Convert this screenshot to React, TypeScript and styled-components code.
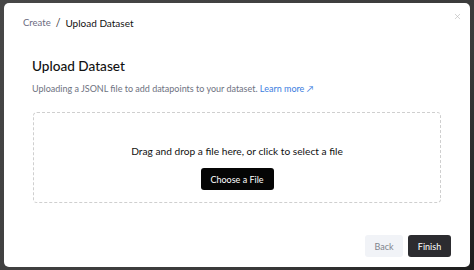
import styled, { createGlobalStyle } from "styled-components";
import { X } from "lucide-react";

const GlobalStyle = createGlobalStyle`
  html, body {
    margin: 0;
    padding: 0;
    height: 100%;
    background: #3d3d3d;
  }
  #root {
    height: 100%;
  }
  * {
    box-sizing: border-box;
  }
`;

const App = () => {
  return (
    <>
      <GlobalStyle />
      <Backdrop>
        <Modal>
          <Header>
            <Crumb>Create</Crumb>
            <Slash>/</Slash>
            <CrumbCurrent>Upload Dataset</CrumbCurrent>
          </Header>
          <CloseButton aria-label="Close">
            <X size={9} strokeWidth={1.6} />
          </CloseButton>
          <Body>
            <Title>Upload Dataset</Title>
            <Subtitle>
              Uploading a JSONL file to add datapoints to your dataset.{" "}
              <LearnMore href="#">Learn more ↗</LearnMore>
            </Subtitle>
            <DropZone>
              <DropText>Drag and drop a file here, or click to select a file</DropText>
              <ChooseButton>Choose a File</ChooseButton>
            </DropZone>
          </Body>
          <Footer>
            <BackButton>Back</BackButton>
            <FinishButton>Finish</FinishButton>
          </Footer>
        </Modal>
      </Backdrop>
    </>
  );
};

export default App;

const Backdrop = styled.div`
  height: 270px;
  padding: 3px 4px 3px 4px;
  background: linear-gradient(135deg, #474747 0%, #3a3a3a 70%, #1e1e1e 100%);
`;

const Modal = styled.div`
  position: relative;
  height: 264px;
  width: 466px;
  background: #ffffff;
  border-radius: 5px;
  display: flex;
  flex-direction: column;
  font-family: Lato, "Liberation Sans", sans-serif;
`;

const Header = styled.div`
  display: flex;
  align-items: center;
  gap: 5px;
  padding: 6px 19px 0;
  height: 33px;
`;

const Crumb = styled.span`
  font-size: 9.5px;
  color: #6b6b80;
`;

const Slash = styled.span`
  font-size: 10.5px;
  color: #333;
`;

const CrumbCurrent = styled.span`
  font-size: 10px;
  font-weight: 400;
  color: #111;
`;

const CloseButton = styled.button`
  position: absolute;
  top: 9px;
  right: 8px;
  border: none;
  background: none;
  padding: 0;
  color: #b5b5b5;
  display: flex;
`;

const Body = styled.div`
  flex: 1;
  padding: 22px 28px 0 28px;
  display: flex;
  flex-direction: column;
`;

const Title = styled.h2`
  margin: 0;
  font-size: 13.6px;
  font-weight: 500;
  color: #111;
`;

const Subtitle = styled.p`
  margin: 9px 0 0;
  font-size: 9px;
  color: #6e7281;
`;

const LearnMore = styled.a`
  color: #3b7de0;
  text-decoration: none;
`;

const DropZone = styled.div`
  margin-top: 18px;
  height: 91px;
  width: 408px;
  margin-left: 1px;
  border: 1px dashed #cfcfcf;
  border-radius: 4px;
  display: flex;
  flex-direction: column;
  align-items: center;
  justify-content: center;
  padding-top: 20px;
  gap: 11px;
`;

const DropText = styled.div`
  font-size: 10.2px;
  color: #111;
`;

const ChooseButton = styled.button`
  background: #050505;
  color: #fff;
  border: none;
  border-radius: 3px;
  font-family: inherit;
  font-size: 9px;
  height: 22px;
  width: 73px;
  padding: 0;
`;

const Footer = styled.div`
  display: flex;
  justify-content: flex-end;
  gap: 5px;
  padding: 0 19px 10px;
`;

const FooterButton = styled.button`
  height: 22px;
  border: none;
  border-radius: 3px;
  font-family: inherit;
  font-size: 9px;
  padding: 0;
`;

const BackButton = styled(FooterButton)`
  background: #f1f3f7;
  color: #80838c;
  width: 38px;
`;

const FinishButton = styled(FooterButton)`
  background: #2c2c30;
  color: #fff;
  width: 43px;
`;
